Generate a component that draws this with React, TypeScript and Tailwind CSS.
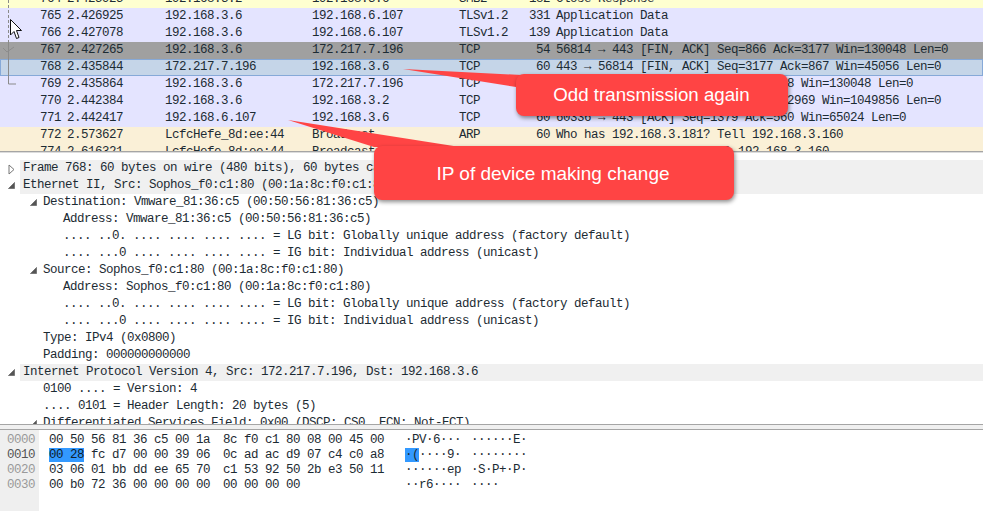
const packets = [
  { n: "764", t: "2.425925", s: "192.168.3.2", d: "192.168.3.6", p: "SMB2", l: "182", i: "Close Response", c: "bg-[#feffd0]" },
  { n: "765", t: "2.426925", s: "192.168.3.6", d: "192.168.6.107", p: "TLSv1.2", l: "331", i: "Application Data", c: "bg-[#e4e4ff]" },
  { n: "766", t: "2.427078", s: "192.168.3.6", d: "192.168.6.107", p: "TLSv1.2", l: "139", i: "Application Data", c: "bg-[#e4e4ff]" },
  { n: "767", t: "2.427265", s: "192.168.3.6", d: "172.217.7.196", p: "TCP", l: "54", i: "56814 → 443 [FIN, ACK] Seq=866 Ack=3177 Win=130048 Len=0", c: "bg-[#a0a0a0]" },
  { n: "768", t: "2.435844", s: "172.217.7.196", d: "192.168.3.6", p: "TCP", l: "60", i: "443 → 56814 [FIN, ACK] Seq=3177 Ack=867 Win=45056 Len=0", c: "bg-[#c5d5e8] shadow-[inset_0_0_0_1px_#86a9d8]" },
  { n: "769", t: "2.435864", s: "192.168.3.6", d: "172.217.7.196", p: "TCP", l: "54", i: "56814 → 443 [ACK] Seq=867 Ack=3178 Win=130048 Len=0", c: "bg-[#e4e4ff]" },
  { n: "770", t: "2.442384", s: "192.168.3.6", d: "192.168.3.2", p: "TCP", l: "54", i: "49671 → 445 [ACK] Seq=210134 Ack=2969 Win=1049856 Len=0", c: "bg-[#e4e4ff]" },
  { n: "771", t: "2.442417", s: "192.168.6.107", d: "192.168.3.6", p: "TCP", l: "60", i: "60336 → 443 [ACK] Seq=1379 Ack=560 Win=65024 Len=0", c: "bg-[#e4e4ff]" },
  { n: "772", t: "2.573627", s: "LcfcHefe_8d:ee:44", d: "Broadcast", p: "ARP", l: "60", i: "Who has 192.168.3.181? Tell 192.168.3.160", c: "bg-[#faf0d7]" },
  { n: "774", t: "2.616321", s: "LcfcHefe_8d:ee:44", d: "Broadcast", p: "ARP", l: "60", i: "Who has 192.168.3.1? Tell 192.168.3.160", c: "bg-[#faf0d7]" },
];

const details: { x: string; text: string; arrow?: "open" | "closed"; band?: boolean }[] = [
  { x: "pl-[23px]", text: "Frame 768: 60 bytes on wire (480 bits), 60 bytes captured (480 bits) on interface 0", arrow: "closed", band: true },
  { x: "pl-[23px]", text: "Ethernet II, Src: Sophos_f0:c1:80 (00:1a:8c:f0:c1:80), Dst: Vmware_81:36:c5 (00:50:56:81:36:c5)", arrow: "open", band: true },
  { x: "pl-[43px]", text: "Destination: Vmware_81:36:c5 (00:50:56:81:36:c5)", arrow: "open" },
  { x: "pl-[63px]", text: "Address: Vmware_81:36:c5 (00:50:56:81:36:c5)" },
  { x: "pl-[63px]", text: ".... ..0. .... .... .... .... = LG bit: Globally unique address (factory default)" },
  { x: "pl-[63px]", text: ".... ...0 .... .... .... .... = IG bit: Individual address (unicast)" },
  { x: "pl-[43px]", text: "Source: Sophos_f0:c1:80 (00:1a:8c:f0:c1:80)", arrow: "open" },
  { x: "pl-[63px]", text: "Address: Sophos_f0:c1:80 (00:1a:8c:f0:c1:80)" },
  { x: "pl-[63px]", text: ".... ..0. .... .... .... .... = LG bit: Globally unique address (factory default)" },
  { x: "pl-[63px]", text: ".... ...0 .... .... .... .... = IG bit: Individual address (unicast)" },
  { x: "pl-[43px]", text: "Type: IPv4 (0x0800)" },
  { x: "pl-[43px]", text: "Padding: 000000000000" },
  { x: "pl-[23px]", text: "Internet Protocol Version 4, Src: 172.217.7.196, Dst: 192.168.3.6", arrow: "open", band: true },
  { x: "pl-[43px]", text: "0100 .... = Version: 4" },
  { x: "pl-[43px]", text: ".... 0101 = Header Length: 20 bytes (5)" },
  { x: "pl-[43px]", text: "Differentiated Services Field: 0x00 (DSCP: CS0, ECN: Not-ECT)", arrow: "open" },
];

const hexRows = [
  { o: "0000", h1: "00 50 56 81 36 c5 00 1a", h2: "8c f0 c1 80 08 00 45 00", a1: "·PV·6···", a2: "······E·" },
  { o: "0010", h1: "", h2: "0c ad ac d9 07 c4 c0 a8", a1: "", a2: "········" },
  { o: "0020", h1: "03 06 01 bb dd ee 65 70", h2: "c1 53 92 50 2b e3 50 11", a1: "······ep", a2: "·S·P+·P·" },
  { o: "0030", h1: "00 b0 72 36 00 00 00 00", h2: "00 00 00 00", a1: "··r6····", a2: "····" },
];

function Arrow({ open }: { open: boolean }) {
  return open ? (
    <svg width="9" height="9" viewBox="0 0 9 9" className="absolute">
      <path d="M7.5 1.5V7.5H1.5Z" fill="#555" stroke="#777" />
    </svg>
  ) : (
    <svg width="9" height="11" viewBox="0 0 9 11" className="absolute">
      <path d="M2 1L7 5.5L2 10Z" fill="#fff" stroke="#777" />
    </svg>
  );
}

export default function App() {
  return (
    <div className="relative w-[983px] h-[511px] overflow-hidden bg-white text-[12.5px] tracking-[-0.5px] leading-[17px] text-[#1c2b33] font-['Liberation_Mono','DejaVu_Sans_Mono',monospace] whitespace-pre">
      <div className="h-[151px] overflow-hidden">
        <div className="-mt-[9px]">
          {packets.map((r) => (
            <div key={r.n} className={`flex h-[17px] ${r.c}`}>
              <span className="w-[61px] text-right">{r.n}</span>
              <span className="ml-[6px] w-[98px]">{r.t}</span>
              <span className="w-[147px]">{r.s}</span>
              <span className="w-[147px]">{r.d}</span>
              <span className="w-[70px]">{r.p}</span>
              <span className="w-[21px] text-right">{r.l}</span>
              <span className="ml-[6px]">{r.i}</span>
            </div>
          ))}
        </div>
      </div>
      <div className="h-[2px] bg-[#a5a5a5] border-b border-[#dcdcdc]" />

      <div className="h-[271px] overflow-hidden pt-[7px]">
        {details.map((d, i) => (
          <div key={i} className={`relative flex h-[17px] ${d.x} ${d.band ? "ml-[20px] !pl-[3px] bg-[#f0f0f0]" : ""}`}>
            {d.arrow && (
              <span className={`absolute top-[4px] ${d.band ? "-left-[13px]" : "left-[29px]"}`}>
                <Arrow open={d.arrow === "open"} />
              </span>
            )}
            {d.text}
          </div>
        ))}
      </div>

      <div className="h-[6px] border-y border-[#a5a5a5] bg-[#f0f0f0]" />

      <div className="flex h-[81px]">
        <div className="w-[39px] bg-[#efefef] pt-[3px] text-right text-[#9a9a9a] pr-[4px]">
          {hexRows.map((r) => (
            <div key={r.o} className={`h-[15px] leading-[15px] ${r.o === "0010" ? "text-[#555]" : ""}`}>{r.o}</div>
          ))}
        </div>
        <div className="pl-[10px] pt-[3px]">
          {hexRows.map((r) => (
            <div key={r.o} className="flex h-[15px] leading-[15px]">
              <span className="w-[174px]">
                {r.o === "0010" ? (
                  <>
                    <span className="bg-[#3399ff] text-[#10202c]">00 28</span> fc d7 00 00 39 06
                  </>
                ) : (
                  r.h1
                )}
              </span>
              <span className="w-[182px]">{r.h2}</span>
              <span className="w-[66px]">
                {r.o === "0010" ? (
                  <>
                    <span className="bg-[#3399ff]">·(</span>····9·
                  </>
                ) : (
                  r.a1
                )}
              </span>
              <span>{r.a2}</span>
            </div>
          ))}
        </div>
      </div>

      {/* packet relation marks */}
      <svg width="24" height="90" viewBox="0 0 24 90" className="absolute left-0 top-0">
        <path d="M8.5 0V42" stroke="#8a8a8a" strokeDasharray="3 2" fill="none" />
        <path d="M8.5 42V84H16" stroke="#8a8a8a" fill="none" />
        <path d="M3 48L7 52L14 47" stroke="#8c8c8c" fill="none" />
        <path d="M10.5 19.5V35L14 31.5L16.5 38.5L19 37.5L16.5 30.5H21.5Z" fill="#fff" stroke="#111" strokeWidth="1" />
      </svg>

      {/* callouts */}
      <svg width="983" height="511" viewBox="0 0 983 511" className="absolute left-0 top-0 pointer-events-none">
        <path d="M403 69L522 75L516 87Z" fill="#ff4444" />
        <path d="M288 120L460 147L374 147Z" fill="#ff4444" />
      </svg>
      <div className="absolute left-[516px] top-[74px] w-[272px] h-[42px] rounded-[8px] bg-[#ff4444] shadow-[1px_2px_4px_rgba(0,0,0,0.45)] flex items-center justify-center pb-[2px] pr-[1px] text-white text-[18.7px] tracking-normal font-['Liberation_Sans',Arial,sans-serif]">
        Odd transmission again
      </div>
      <div className="absolute left-[374px] top-[146px] w-[360px] h-[54px] rounded-[8px] bg-[#ff4444] shadow-[1px_2px_4px_rgba(0,0,0,0.45)] flex items-center justify-center pr-[2px] text-white text-[19px] tracking-normal font-['Liberation_Sans',Arial,sans-serif]">
        IP of device making change
      </div>
    </div>
  );
}
